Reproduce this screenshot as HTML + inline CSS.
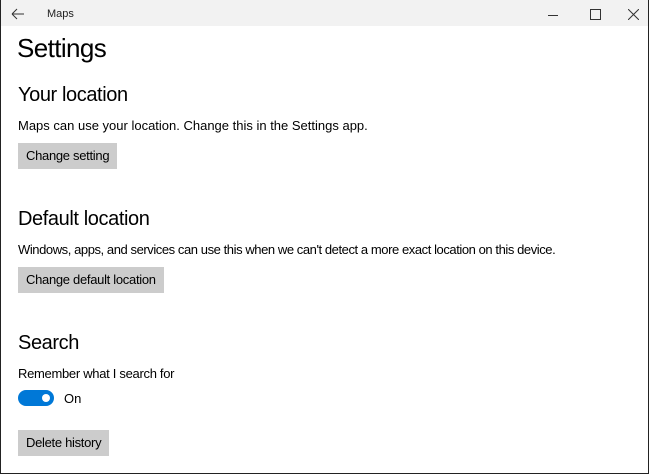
<!DOCTYPE html><html><head><style>
body{margin:0;width:649px;height:475px;overflow:hidden;font-family:"Liberation Sans",sans-serif;background:#fff;position:relative}
.win{position:absolute;left:0;top:0;width:647px;height:473px;border:1px solid #222;border-top:none}
.tb{position:absolute;left:0;top:0;width:647px;height:26px;background:#f2f2f2}
.a{position:absolute;white-space:nowrap;color:#000}
.h{font-size:20px;font-weight:300;letter-spacing:-0.4px}
.t{font-size:13px}
.btn{position:absolute;background:#ccc;font-size:13px;line-height:26px;padding:0 8px;left:17px;letter-spacing:-0.3px}
</style></head><body><div class="win">
<div class="tb">
<svg style="position:absolute;left:10px;top:8px" width="14" height="12"><path d="M1 6H13M1 6L6 1M1 6L6 11" stroke="#333" fill="none" stroke-width="1"/></svg>
<div class="a" style="left:46px;top:8px;font-size:11px;color:#222">Maps</div>
<div style="position:absolute;left:547px;top:15px;width:10px;height:1px;background:#333"></div>
<div style="position:absolute;left:589px;top:9px;width:9px;height:9px;border:1px solid #333"></div>
<svg style="position:absolute;left:627px;top:9px" width="11" height="11"><path d="M0 0L11 11M11 0L0 11" stroke="#333"/></svg>
</div>
<div class="a" style="left:16px;top:33px;font-size:26px;font-weight:300;letter-spacing:-0.6px">Settings</div>
<div class="a h" style="left:17px;top:84px">Your location</div>
<div class="a t" style="left:17px;top:118px">Maps can use your location. Change this in the Settings app.</div>
<div class="btn" style="top:143px">Change setting</div>
<div class="a h" style="left:17px;top:208px">Default location</div>
<div class="a t" style="left:17px;top:242px;letter-spacing:-0.43px">Windows, apps, and services can use this when we can't detect a more exact location on this device.</div>
<div class="btn" style="top:267px">Change default location</div>
<div class="a h" style="left:17px;top:332px">Search</div>
<div class="a t" style="left:17px;top:366px;letter-spacing:-0.3px">Remember what I search for</div>
<div style="position:absolute;left:17px;top:390px;width:36px;height:16px;border-radius:8px;background:#0078d7"></div>
<div style="position:absolute;left:41px;top:394px;width:8px;height:8px;border-radius:50%;background:#fff"></div>
<div class="a t" style="left:63px;top:391px">On</div>
<div class="btn" style="top:430px">Delete history</div>
</div></body></html>
